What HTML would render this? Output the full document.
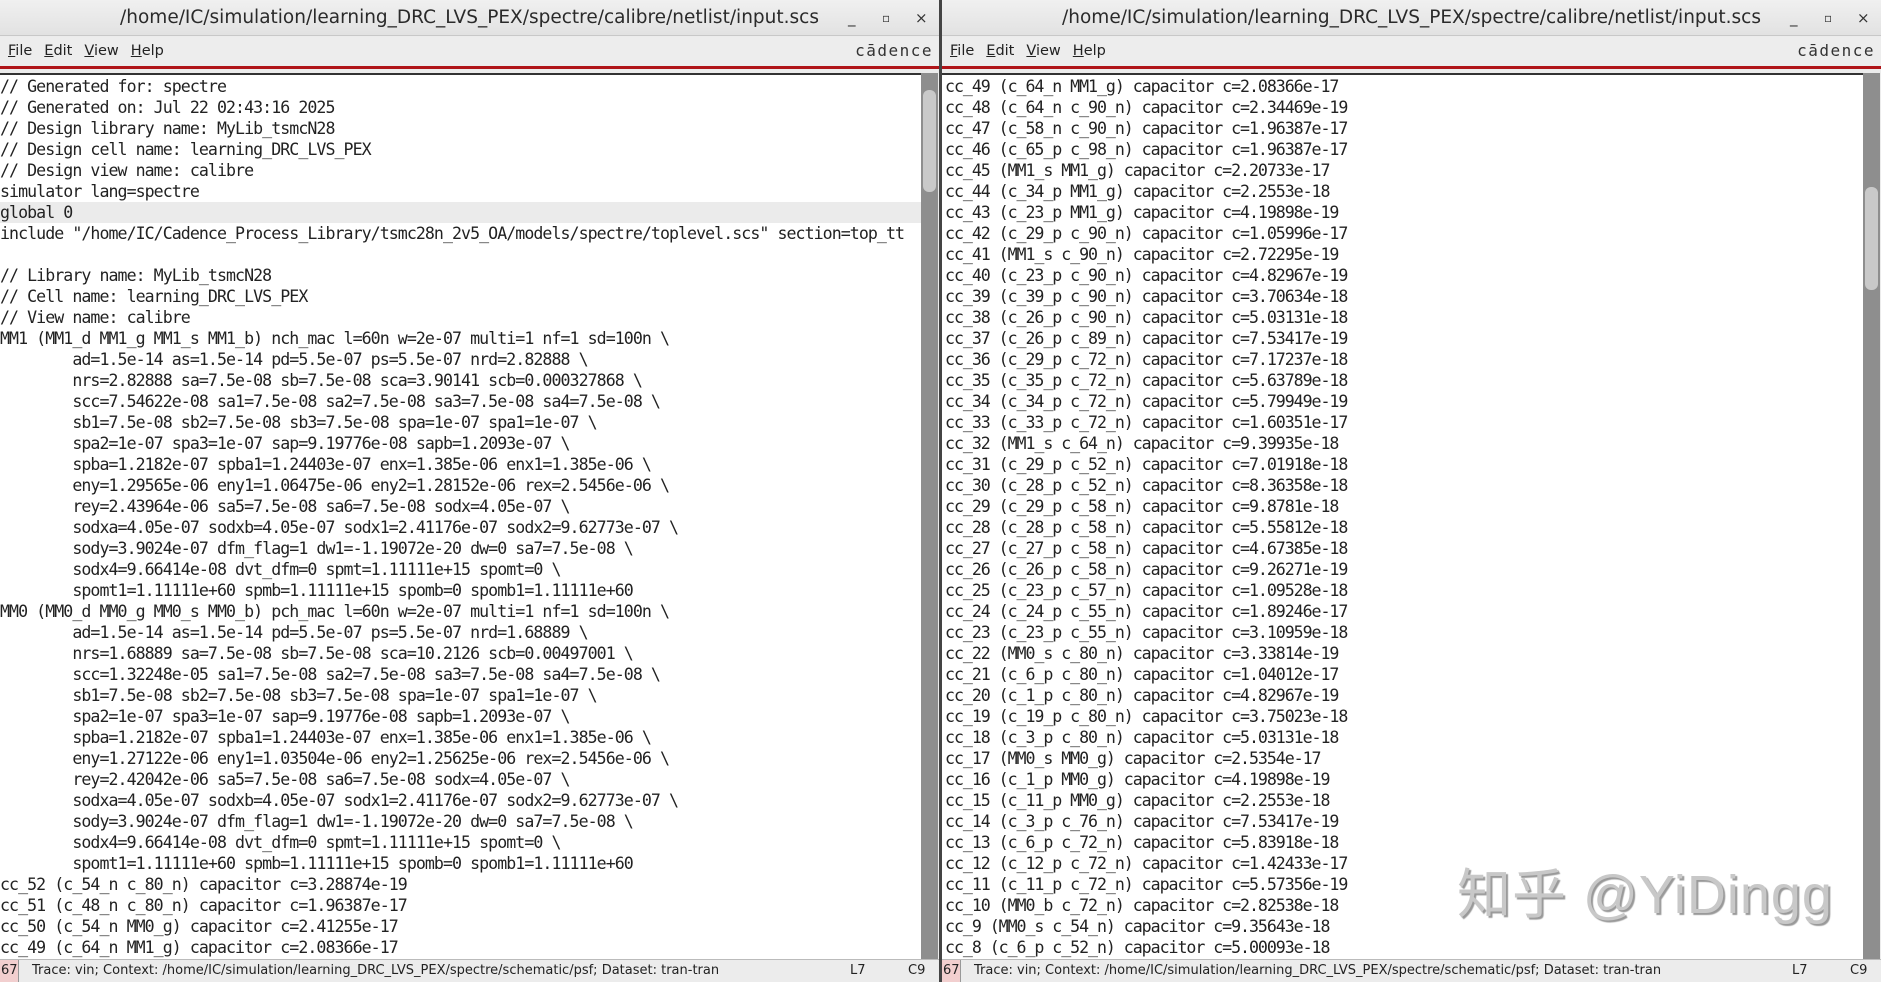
<!DOCTYPE html>
<html><head><meta charset="utf-8"><style>
*{margin:0;padding:0;box-sizing:border-box}
body{width:1881px;height:982px;overflow:hidden;background:#fff;position:relative;font-family:"DejaVu Sans","Liberation Sans",sans-serif}
.win{position:absolute;top:0;height:982px;background:#ececec}
.title{position:absolute;left:0;right:0;top:0;height:36px;background:linear-gradient(#f0f0f0,#e2e2e2);border-bottom:1px solid #c8c8c8;text-align:center;font-size:18.5px;line-height:36px;color:#2a2a2a}
.ctl{position:absolute;top:0;font-size:15px;line-height:36px;color:#333}
.menu{position:absolute;left:0;right:0;top:37px;height:28px;background:#ededed;font-size:14.5px;line-height:28px;color:#222}
.menu span{margin-left:8px;margin-right:4px}
.cad{position:absolute;right:6px;top:0;font-family:"DejaVu Sans Mono",monospace;font-size:16px;letter-spacing:1.5px;color:#333}
.red{position:absolute;left:0;right:0;top:66px;height:3px;background:#b01418}
.text{position:absolute;top:73px;bottom:23px;background:#fff;border-top:2px solid #333;overflow:hidden}
pre{font-family:"DejaVu Sans Mono","Liberation Mono",monospace;font-size:16.6px;letter-spacing:-0.95px;line-height:21px;color:#222;padding-top:1px;white-space:pre}
.r pre{letter-spacing:-1.05px}
.hl{background:#ebebeb;display:block}
.sb{position:absolute;top:73px;bottom:23px;width:17px;background:#8e8e8e}
.th{position:absolute;left:2px;width:13px;background:#c9c9c9;border-radius:6px}
.status{position:absolute;left:0;right:0;bottom:0;height:23px;background:#ececec;border-top:1px solid #bbb;font-size:13px;line-height:22px;color:#222}
.n{position:absolute;left:0;top:0;width:19px;height:22px;background:#f2cfcf;border-right:1px solid #999;padding-left:1px}
.wm{position:absolute;left:1457px;top:850px;font-family:"Liberation Sans","Noto Sans CJK SC",sans-serif;font-size:54px;color:#c8c8c8;text-shadow:2px 2px 1px #999;letter-spacing:1px}
</style></head><body>

<div class="win" style="left:0;width:939px">
 <div class="title">/home/IC/simulation/learning_DRC_LVS_PEX/spectre/calibre/netlist/input.scs</div>
 <div class="ctl" style="left:848px">_</div><div class="ctl" style="left:882px;font-size:12px">▫</div><div class="ctl" style="left:915px">×</div>
 <div class="menu"><span><u>F</u>ile</span><span><u>E</u>dit</span><span><u>V</u>iew</span><span><u>H</u>elp</span><div class="cad">cādence</div></div>
 <div class="red"></div>
 <div class="text" style="left:0;width:921px"><pre>// Generated for: spectre
// Generated on: Jul 22 02:43:16 2025
// Design library name: MyLib_tsmcN28
// Design cell name: learning_DRC_LVS_PEX
// Design view name: calibre
simulator lang=spectre
<span class="hl">global 0</span>include "/home/IC/Cadence_Process_Library/tsmc28n_2v5_OA/models/spectre/toplevel.scs" section=top_tt

// Library name: MyLib_tsmcN28
// Cell name: learning_DRC_LVS_PEX
// View name: calibre
MM1 (MM1_d MM1_g MM1_s MM1_b) nch_mac l=60n w=2e-07 multi=1 nf=1 sd=100n \
        ad=1.5e-14 as=1.5e-14 pd=5.5e-07 ps=5.5e-07 nrd=2.82888 \
        nrs=2.82888 sa=7.5e-08 sb=7.5e-08 sca=3.90141 scb=0.000327868 \
        scc=7.54622e-08 sa1=7.5e-08 sa2=7.5e-08 sa3=7.5e-08 sa4=7.5e-08 \
        sb1=7.5e-08 sb2=7.5e-08 sb3=7.5e-08 spa=1e-07 spa1=1e-07 \
        spa2=1e-07 spa3=1e-07 sap=9.19776e-08 sapb=1.2093e-07 \
        spba=1.2182e-07 spba1=1.24403e-07 enx=1.385e-06 enx1=1.385e-06 \
        eny=1.29565e-06 eny1=1.06475e-06 eny2=1.28152e-06 rex=2.5456e-06 \
        rey=2.43964e-06 sa5=7.5e-08 sa6=7.5e-08 sodx=4.05e-07 \
        sodxa=4.05e-07 sodxb=4.05e-07 sodx1=2.41176e-07 sodx2=9.62773e-07 \
        sody=3.9024e-07 dfm_flag=1 dw1=-1.19072e-20 dw=0 sa7=7.5e-08 \
        sodx4=9.66414e-08 dvt_dfm=0 spmt=1.11111e+15 spomt=0 \
        spomt1=1.11111e+60 spmb=1.11111e+15 spomb=0 spomb1=1.11111e+60
MM0 (MM0_d MM0_g MM0_s MM0_b) pch_mac l=60n w=2e-07 multi=1 nf=1 sd=100n \
        ad=1.5e-14 as=1.5e-14 pd=5.5e-07 ps=5.5e-07 nrd=1.68889 \
        nrs=1.68889 sa=7.5e-08 sb=7.5e-08 sca=10.2126 scb=0.00497001 \
        scc=1.32248e-05 sa1=7.5e-08 sa2=7.5e-08 sa3=7.5e-08 sa4=7.5e-08 \
        sb1=7.5e-08 sb2=7.5e-08 sb3=7.5e-08 spa=1e-07 spa1=1e-07 \
        spa2=1e-07 spa3=1e-07 sap=9.19776e-08 sapb=1.2093e-07 \
        spba=1.2182e-07 spba1=1.24403e-07 enx=1.385e-06 enx1=1.385e-06 \
        eny=1.27122e-06 eny1=1.03504e-06 eny2=1.25625e-06 rex=2.5456e-06 \
        rey=2.42042e-06 sa5=7.5e-08 sa6=7.5e-08 sodx=4.05e-07 \
        sodxa=4.05e-07 sodxb=4.05e-07 sodx1=2.41176e-07 sodx2=9.62773e-07 \
        sody=3.9024e-07 dfm_flag=1 dw1=-1.19072e-20 dw=0 sa7=7.5e-08 \
        sodx4=9.66414e-08 dvt_dfm=0 spmt=1.11111e+15 spomt=0 \
        spomt1=1.11111e+60 spmb=1.11111e+15 spomb=0 spomb1=1.11111e+60
cc_52 (c_54_n c_80_n) capacitor c=3.28874e-19
cc_51 (c_48_n c_80_n) capacitor c=1.96387e-17
cc_50 (c_54_n MM0_g) capacitor c=2.41255e-17
cc_49 (c_64_n MM1_g) capacitor c=2.08366e-17</pre></div>
 <div class="sb" style="left:921px"><div class="th" style="top:17px;height:102px"></div></div>
 <div class="status"><div class="n">67</div><span style="position:absolute;left:32px">Trace: vin; Context: /home/IC/simulation/learning_DRC_LVS_PEX/spectre/schematic/psf; Dataset: tran-tran</span><span style="position:absolute;left:850px">L7</span><span style="position:absolute;left:908px">C9</span></div>
</div>

<div style="position:absolute;left:939px;top:0;width:3px;height:982px;background:#444"></div>

<div class="win r" style="left:942px;width:939px">
 <div class="title">/home/IC/simulation/learning_DRC_LVS_PEX/spectre/calibre/netlist/input.scs</div>
 <div class="ctl" style="left:848px">_</div><div class="ctl" style="left:882px;font-size:12px">▫</div><div class="ctl" style="left:915px">×</div>
 <div class="menu"><span><u>F</u>ile</span><span><u>E</u>dit</span><span><u>V</u>iew</span><span><u>H</u>elp</span><div class="cad">cādence</div></div>
 <div class="red"></div>
 <div class="text" style="left:0;width:921px;padding-left:3px"><pre>cc_49 (c_64_n MM1_g) capacitor c=2.08366e-17
cc_48 (c_64_n c_90_n) capacitor c=2.34469e-19
cc_47 (c_58_n c_90_n) capacitor c=1.96387e-17
cc_46 (c_65_p c_98_n) capacitor c=1.96387e-17
cc_45 (MM1_s MM1_g) capacitor c=2.20733e-17
cc_44 (c_34_p MM1_g) capacitor c=2.2553e-18
cc_43 (c_23_p MM1_g) capacitor c=4.19898e-19
cc_42 (c_29_p c_90_n) capacitor c=1.05996e-17
cc_41 (MM1_s c_90_n) capacitor c=2.72295e-19
cc_40 (c_23_p c_90_n) capacitor c=4.82967e-19
cc_39 (c_39_p c_90_n) capacitor c=3.70634e-18
cc_38 (c_26_p c_90_n) capacitor c=5.03131e-18
cc_37 (c_26_p c_89_n) capacitor c=7.53417e-19
cc_36 (c_29_p c_72_n) capacitor c=7.17237e-18
cc_35 (c_35_p c_72_n) capacitor c=5.63789e-18
cc_34 (c_34_p c_72_n) capacitor c=5.79949e-19
cc_33 (c_33_p c_72_n) capacitor c=1.60351e-17
cc_32 (MM1_s c_64_n) capacitor c=9.39935e-18
cc_31 (c_29_p c_52_n) capacitor c=7.01918e-18
cc_30 (c_28_p c_52_n) capacitor c=8.36358e-18
cc_29 (c_29_p c_58_n) capacitor c=9.8781e-18
cc_28 (c_28_p c_58_n) capacitor c=5.55812e-18
cc_27 (c_27_p c_58_n) capacitor c=4.67385e-18
cc_26 (c_26_p c_58_n) capacitor c=9.26271e-19
cc_25 (c_23_p c_57_n) capacitor c=1.09528e-18
cc_24 (c_24_p c_55_n) capacitor c=1.89246e-17
cc_23 (c_23_p c_55_n) capacitor c=3.10959e-18
cc_22 (MM0_s c_80_n) capacitor c=3.33814e-19
cc_21 (c_6_p c_80_n) capacitor c=1.04012e-17
cc_20 (c_1_p c_80_n) capacitor c=4.82967e-19
cc_19 (c_19_p c_80_n) capacitor c=3.75023e-18
cc_18 (c_3_p c_80_n) capacitor c=5.03131e-18
cc_17 (MM0_s MM0_g) capacitor c=2.5354e-17
cc_16 (c_1_p MM0_g) capacitor c=4.19898e-19
cc_15 (c_11_p MM0_g) capacitor c=2.2553e-18
cc_14 (c_3_p c_76_n) capacitor c=7.53417e-19
cc_13 (c_6_p c_72_n) capacitor c=5.83918e-18
cc_12 (c_12_p c_72_n) capacitor c=1.42433e-17
cc_11 (c_11_p c_72_n) capacitor c=5.57356e-19
cc_10 (MM0_b c_72_n) capacitor c=2.82538e-18
cc_9 (MM0_s c_54_n) capacitor c=9.35643e-18
cc_8 (c_6_p c_52_n) capacitor c=5.00093e-18</pre></div>
 <div class="sb" style="left:921px"><div class="th" style="top:114px;height:103px"></div></div>
 <div class="status"><div class="n">67</div><span style="position:absolute;left:32px">Trace: vin; Context: /home/IC/simulation/learning_DRC_LVS_PEX/spectre/schematic/psf; Dataset: tran-tran</span><span style="position:absolute;left:850px">L7</span><span style="position:absolute;left:908px">C9</span></div>
</div>

<div class="wm">知乎 @YiDingg</div>
</body></html>
